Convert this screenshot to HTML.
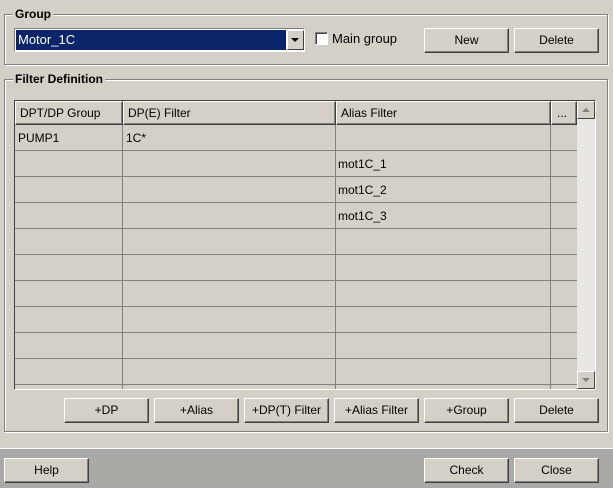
<!DOCTYPE html>
<html><head><style>
*{margin:0;padding:0;box-sizing:border-box}
body{width:613px;height:488px;background:#d4d0c8;font-family:"Liberation Sans",sans-serif;font-size:12px;color:#000;position:relative;overflow:hidden}
.a{position:absolute}
.frame{position:absolute;border:1px solid #808080;box-shadow:1px 1px 0 #fff, inset 1px 1px 0 #fff}
.legend{position:absolute;background:#d4d0c8;font-weight:bold;font-size:12px;padding:0 2px;line-height:14px}
.btn{position:absolute;height:25px;width:85px;background:#d4d0c8;border-top:1px solid #fff;border-left:1px solid #fff;border-right:1px solid #404040;border-bottom:1px solid #404040;box-shadow:inset -1px -1px 0 #808080;text-align:center;line-height:22px;font-size:12px}
.vl{position:absolute;width:1px;background:#808080}
.hl{position:absolute;height:1px;background:#808080}
.cell{position:absolute;font-size:12px;line-height:14px}
.hd{position:absolute;top:101px;height:24px;border-top:1px solid #fff;border-left:1px solid #fff;border-right:1px solid #404040;border-bottom:1px solid #404040;box-shadow:inset -1px -1px 0 #808080;padding-left:4px;line-height:22px}
</style></head><body>
<div class="frame" style="left:4px;top:14px;width:604px;height:51px"></div>
<div class="legend" style="left:13px;top:7px">Group</div>
<div class="a" style="left:14px;top:28px;width:291px;height:24px;border-top:1px solid #808080;border-left:1px solid #808080;border-right:1px solid #fff;border-bottom:1px solid #fff;background:#fff">
 <div class="a" style="left:1px;top:1px;width:270px;height:20px;background:#0a246a;color:#fff;padding-left:2px;line-height:19px;font-size:13px">Motor_1C</div>
 <div class="a" style="left:272px;top:1px;width:17px;height:20px;background:#d4d0c8;border-top:1px solid #fff;border-left:1px solid #fff;border-right:1px solid #404040;border-bottom:1px solid #404040">
  <div class="a" style="left:3px;top:7px;width:0;height:0;border-left:4px solid transparent;border-right:4px solid transparent;border-top:4px solid #000"></div>
 </div>
</div>
<div class="a" style="left:315px;top:32px;width:13px;height:13px;background:#fff;border-top:1px solid #808080;border-left:1px solid #808080;border-right:1px solid #fff;border-bottom:1px solid #fff;box-shadow:inset 1px 1px 0 #404040"></div>
<div class="cell" style="left:332px;top:32px;font-size:13px">Main group</div>
<div class="btn" style="left:424px;top:28px">New</div>
<div class="btn" style="left:514px;top:28px">Delete</div>

<div class="frame" style="left:4px;top:79px;width:604px;height:353px"></div>
<div class="legend" style="left:13px;top:72px">Filter Definition</div>

<div class="a" style="left:14px;top:100px;width:582px;height:290px;border-top:1px solid #404040;border-left:1px solid #404040;border-right:1px solid #fff;border-bottom:1px solid #fff"></div>
<div class="hd" style="left:15px;width:108px">DPT/DP Group</div>
<div class="hd" style="left:123px;width:213px">DP(E) Filter</div>
<div class="hd" style="left:336px;width:215px">Alias Filter</div>
<div class="hd" style="left:551px;width:26px;padding-left:5px">...</div>
<div class="vl" style="left:122px;top:125px;height:264px"></div>
<div class="vl" style="left:335px;top:125px;height:264px"></div>
<div class="vl" style="left:550px;top:125px;height:264px"></div>
<div class="hl" style="left:15px;top:150px;width:562px"></div>
<div class="hl" style="left:15px;top:176px;width:562px"></div>
<div class="hl" style="left:15px;top:202px;width:562px"></div>
<div class="hl" style="left:15px;top:228px;width:562px"></div>
<div class="hl" style="left:15px;top:254px;width:562px"></div>
<div class="hl" style="left:15px;top:280px;width:562px"></div>
<div class="hl" style="left:15px;top:306px;width:562px"></div>
<div class="hl" style="left:15px;top:332px;width:562px"></div>
<div class="hl" style="left:15px;top:358px;width:562px"></div>
<div class="hl" style="left:15px;top:384px;width:562px"></div>
<div class="cell" style="left:18px;top:131px">PUMP1</div>
<div class="cell" style="left:126px;top:131px">1C*</div>
<div class="cell" style="left:338px;top:157px">mot1C_1</div>
<div class="cell" style="left:338px;top:183px">mot1C_2</div>
<div class="cell" style="left:338px;top:209px">mot1C_3</div>
<div class="a" style="left:577px;top:101px;width:18px;height:288px;background:#e9e7e3"></div>
<div class="a" style="left:577px;top:101px;width:18px;height:18px;background:#d4d0c8;border-top:1px solid #fff;border-left:1px solid #fff;border-right:1px solid #404040;border-bottom:1px solid #404040"><div class="a" style="left:4px;top:6px;border-left:4px solid transparent;border-right:4px solid transparent;border-bottom:4px solid #808080"></div></div>
<div class="a" style="left:577px;top:371px;width:18px;height:18px;background:#d4d0c8;border-top:1px solid #fff;border-left:1px solid #fff;border-right:1px solid #404040;border-bottom:1px solid #404040"><div class="a" style="left:4px;top:6px;border-left:4px solid transparent;border-right:4px solid transparent;border-top:4px solid #808080"></div></div>

<div class="btn" style="left:64px;top:398px">+DP</div>
<div class="btn" style="left:154px;top:398px">+Alias</div>
<div class="btn" style="left:244px;top:398px">+DP(T) Filter</div>
<div class="btn" style="left:334px;top:398px">+Alias Filter</div>
<div class="btn" style="left:424px;top:398px">+Group</div>
<div class="btn" style="left:514px;top:398px">Delete</div>

<div class="a" style="left:0;top:448px;width:613px;height:40px;background:#a9aaa6;border-top:1px solid #fff"></div>
<div class="btn" style="left:4px;top:458px">Help</div>
<div class="btn" style="left:424px;top:458px">Check</div>
<div class="btn" style="left:514px;top:458px">Close</div>
</body></html>
